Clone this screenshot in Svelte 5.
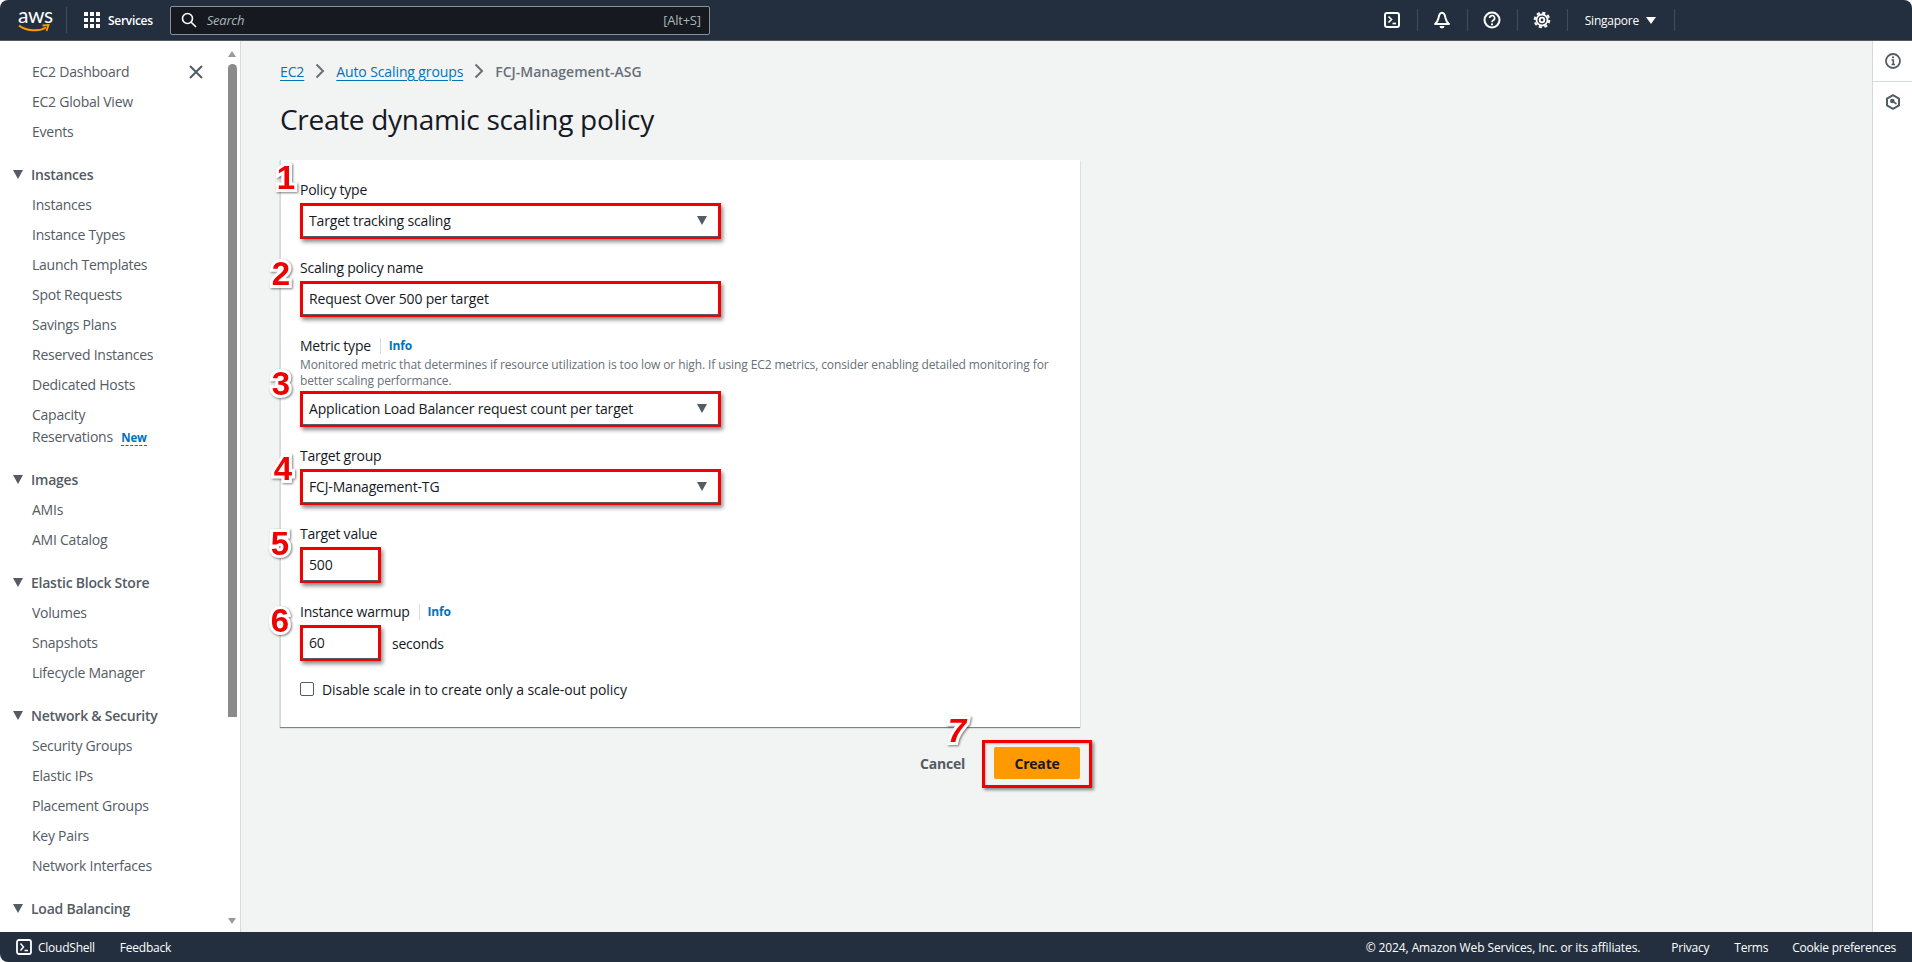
<script>
  const groups = [
    { items: ['EC2 Dashboard', 'EC2 Global View', 'Events'] },
    { title: 'Instances', items: ['Instances', 'Instance Types', 'Launch Templates', 'Spot Requests', 'Savings Plans', 'Reserved Instances', 'Dedicated Hosts'], extra: true },
    { title: 'Images', items: ['AMIs', 'AMI Catalog'] },
    { title: 'Elastic Block Store', items: ['Volumes', 'Snapshots', 'Lifecycle Manager'] },
    { title: 'Network & Security', items: ['Security Groups', 'Elastic IPs', 'Placement Groups', 'Key Pairs', 'Network Interfaces'] },
    { title: 'Load Balancing', items: [] }
  ];
</script>

<div class="page">
  <header class="top">
    <div class="logo">
      <span class="logo-text">aws</span>
      <svg class="smile" width="32" height="9" viewBox="0 0 32 9"><path d="M1 1.500C8 7 21 8 28 3.500" fill="none" stroke="#f90" stroke-width="2"/><path d="M24.500 1.500 30.500 1 28.500 7" fill="none" stroke="#f90" stroke-width="1.800"/></svg>
    </div>
    <span class="sep services-sep"></span>
    <svg class="grid" width="16" height="16" viewBox="0 0 16 16" fill="#fff">
      <rect x="0" y="0" width="4" height="4"/><rect x="6" y="0" width="4" height="4"/><rect x="12" y="0" width="4" height="4"/>
      <rect x="0" y="6" width="4" height="4"/><rect x="6" y="6" width="4" height="4"/><rect x="12" y="6" width="4" height="4"/>
      <rect x="0" y="12" width="4" height="4"/><rect x="6" y="12" width="4" height="4"/><rect x="12" y="12" width="4" height="4"/>
    </svg>
    <span class="services">Services</span>
    <div class="search">
      <svg width="16" height="16" viewBox="0 0 16 16" fill="none" stroke="#fff" stroke-width="1.600"><circle cx="6.500" cy="6.500" r="5"/><path d="M10.200 10.200 15 15"/></svg>
      <span class="search-text">Search</span>
      <span class="shortcut">[Alt+S]</span>
    </div>
    <div class="top-right">
      <span class="tool">
        <svg width="18" height="18" viewBox="0 0 18 18" fill="none" stroke="#fff" stroke-width="2"><rect x="2" y="2" width="14" height="14" rx="2"/><path d="M5.500 5.500 8.500 8.500 5.500 11.500" stroke-width="1.700"/><path d="M9.500 12.500H13" stroke-width="1.700"/></svg>
      </span>
      <span class="tool">
        <svg width="18" height="18" viewBox="0 0 18 18" fill="none" stroke="#fff" stroke-width="2"><path d="M2 13h14c-2-1.400-3-3.500-3.500-6C12 4 11 1.800 9 1.800S6 4 5.500 7C5 9.500 4 11.600 2 13Z" stroke-linejoin="round"/><path d="M6.500 15a2.500 2.500 0 0 0 5 0Z" fill="#fff" stroke="none"/></svg>
      </span>
      <span class="tool">
        <svg width="18" height="18" viewBox="0 0 18 18" fill="none" stroke="#fff" stroke-width="2"><circle cx="9" cy="9" r="7.500"/><path d="M6.600 7a2.500 2.500 0 1 1 3.700 2.200c-.9.500-1.300 1-1.300 2" stroke-width="1.700"/><circle cx="9" cy="13.300" r="1.100" fill="#fff" stroke="none"/></svg>
      </span>
      <span class="tool">
        <svg width="18" height="18" viewBox="0 0 18 18" fill="none" stroke="#fff"><circle cx="9" cy="9" r="7.300" stroke-width="2" stroke-dasharray="3.200 2.533"/><circle cx="9" cy="9" r="5.500" stroke-width="1.800"/><circle cx="9" cy="9" r="2.300" stroke-width="1.800"/></svg>
      </span>
      <span class="region">Singapore <i class="caret"></i></span>
    </div>
  </header>

  <div class="middle">
    <nav class="side">
      <button class="close" aria-label="Close">
        <svg width="14" height="14" viewBox="0 0 14 14" fill="none" stroke="#545b64" stroke-width="2"><path d="M1 1 13 13M13 1 1 13"/></svg>
      </button>
      <div class="nav-scroll">
        {#each groups as g}
          <div class="group">
            {#if g.title}
              <div class="gtitle"><i class="tri"></i>{g.title}</div>
            {/if}
            {#each g.items as it}
              <div class="item">{it}</div>
            {/each}
            {#if g.extra}
              <div class="item two">Capacity<br />Reservations <span class="new">New</span></div>
            {/if}
          </div>
        {/each}
      </div>
      <div class="scroll">
        <i class="arrow up"></i>
        <div class="thumb"></div>
        <i class="arrow down"></i>
      </div>
    </nav>

    <main class="main">
      <div class="crumbs">
        <a href="#top">EC2</a>
        <svg width="10" height="16" viewBox="0 0 10 16" fill="none" stroke="#687078" stroke-width="2"><path d="M1.500 1.500 8 8l-6.500 6.500"/></svg>
        <a href="#top">Auto Scaling groups</a>
        <svg width="10" height="16" viewBox="0 0 10 16" fill="none" stroke="#687078" stroke-width="2"><path d="M1.500 1.500 8 8l-6.500 6.500"/></svg>
        <span class="cur">FCJ-Management-ASG</span>
      </div>
      <h1>Create dynamic scaling policy</h1>

      <section class="card">
        <span class="num n1">1</span>
        <span class="num n2">2</span>
        <span class="num n3">3</span>
        <span class="num n4">4</span>
        <span class="num n5">5</span>
        <span class="num n6">6</span>

        <div class="field">
          <div class="label">Policy type</div>
          <div class="control wide">Target tracking scaling<i class="sel-caret"></i></div>
        </div>
        <div class="field">
          <div class="label">Scaling policy name</div>
          <div class="control wide">Request Over 500 per target</div>
        </div>
        <div class="field">
          <div class="label">Metric type<span class="bar"></span><a href="#top" class="info">Info</a></div>
          <div class="desc">Monitored metric that determines if resource utilization is too low or high. If using EC2 metrics, consider enabling detailed monitoring for better scaling performance.</div>
          <div class="control wide">Application Load Balancer request count per target<i class="sel-caret"></i></div>
        </div>
        <div class="field">
          <div class="label">Target group</div>
          <div class="control wide">FCJ-Management-TG<i class="sel-caret"></i></div>
        </div>
        <div class="field">
          <div class="label">Target value</div>
          <div class="control small">500</div>
        </div>
        <div class="field">
          <div class="label">Instance warmup<span class="bar"></span><a href="#top" class="info">Info</a></div>
          <div class="row">
            <div class="control small">60</div>
            <span class="unit">seconds</span>
          </div>
        </div>
        <label class="check"><i class="box"></i>Disable scale in to create only a scale-out policy</label>
      </section>

      <div class="actions">
        <span class="num n7">7</span>
        <span class="cancel">Cancel</span>
        <button class="create">Create</button>
      </div>
    </main>

    <aside class="rail">
      <div class="rail-btn">
        <svg width="16" height="16" viewBox="0 0 16 16" fill="none" stroke="#545b64" stroke-width="1.800"><circle cx="8" cy="8" r="7"/><path d="M6.500 7H8.300V11.500M6.500 11.500H10" stroke-width="1.600"/><circle cx="8" cy="4.300" r="1.100" fill="#545b64" stroke="none"/></svg>
      </div>
      <div class="rail-btn">
        <svg width="16" height="16" viewBox="0 0 16 16" fill="none" stroke="#545b64" stroke-width="2"><path d="M8 1.200 14 4.600V11.400L8 14.800 2 11.400V4.600Z" stroke-linejoin="round"/><circle cx="7.300" cy="7" r="2.300" fill="#545b64" stroke="none"/><path d="M7.500 7.200 11.500 10" stroke-width="1.600"/></svg>
      </div>
    </aside>
  </div>

  <footer class="bottom">
    <svg width="16" height="16" viewBox="0 0 16 16" fill="none" stroke="#fff" stroke-width="1.800"><rect x="1" y="1" width="14" height="14" rx="2"/><path d="M4.500 4.500 7.500 8l-3 3.500" stroke-width="1.500"/><path d="M8.500 11.500H12" stroke-width="1.500"/></svg>
    <span class="cs">CloudShell</span>
    <span class="fb">Feedback</span>
    <span class="copy">© 2024, Amazon Web Services, Inc. or its affiliates.</span>
    <span class="fl first">Privacy</span>
    <span class="fl second">Terms</span>
    <span class="fl">Cookie preferences</span>
  </footer>
</div>

<style>
  :global(body) {
    margin: 0;
    background: #fff;
    font-family: "Open Sans", "Liberation Sans", sans-serif;
    letter-spacing: -0.015em;
  }
  .page {
    width: 1912px;
    height: 962px;
    display: flex;
    flex-direction: column;
    overflow: hidden;
    font-size: 14px;
    color: #16191f;
  }

  .top {
    height: 40px;
    border-bottom: 1px solid #545b64;
    background: #232f3e;
    border-radius: 8px 8px 0 0;
    display: flex;
    align-items: center;
    color: #fff;
    flex: none;
  }
  .logo {
    width: 32px;
    height: 26px;
    margin-left: 18px;
    position: relative;
  }
  .logo-text {
    position: absolute;
    left: 0;
    top: -4px;
    font-family: Lato, sans-serif;
    font-size: 21px;
    line-height: 24px;
    letter-spacing: -0.4px;
  }
  .smile { position: absolute; left: 0; top: 17px; }
  .sep {
    width: 1px;
    height: 22px;
    background: #414d5c;
  }
  .services-sep { margin-left: 16px; margin-right: 17px; height: 26px; }
  .services { margin-left: 8px; font-size: 12px; font-weight: 600; letter-spacing: -0.3px; }
  .search {
    margin-left: 17px;
    height: 27px;
    display: flex;
    align-items: center;
    background: #16191f;
    border: 1px solid #879596;
    border-radius: 2px;
    padding: 0 8px 0 10px;
    box-sizing: content-box;
    width: 520px;
  }
  .search-text {
    margin-left: 10px;
    font-style: italic;
    font-size: 13px;
    color: #aab7b8;
  }
  .shortcut { margin-left: auto; color: #aab7b8; font-size: 13px; }
  .top-right {
    margin-left: 658px;
    display: flex;
    align-items: center;
  }
  .tool {
    width: 50px;
    height: 22px;
    display: flex;
    align-items: center;
    justify-content: center;
    border-right: 1px solid #414d5c;
    box-sizing: border-box;
  }
  .region {
    width: 107px;
    box-sizing: border-box;
    height: 22px;
    padding-left: 17px;
    border-right: 1px solid #414d5c;
    display: flex;
    align-items: center;
    gap: 4px;
    font-size: 12px;
    white-space: pre;
  }
  .caret {
    width: 0; height: 0;
    border-left: 5px solid transparent;
    border-right: 5px solid transparent;
    border-top: 7px solid #fff;
  }

  .middle { flex: 1; display: flex; min-height: 0; }

  .side {
    width: 240px;
    flex: none;
    border-right: 1px solid #d5dbdb;
    background: #fff;
    position: relative;
    overflow: hidden;
    color: #545b64;
  }
  .close {
    position: absolute;
    left: 189px;
    top: 24px;
    padding: 0;
    border: 0;
    background: none;
    display: flex;
  }
  .nav-scroll { padding-top: 16px; }
  .group { margin-bottom: 12px; }
  .item {
    height: 30px;
    line-height: 30px;
    padding-left: 32px;
    white-space: nowrap;
    font-size: 14px;
  }
  .item.two {
    height: 48px;
    line-height: 22px;
    padding-top: 4px;
    box-sizing: content-box;
  }
  .new {
    margin-left: 5px;
    color: #0073bb;
    font-weight: 700;
    font-size: 11.500px;
    border-bottom: 1px dashed #0073bb;
  }
  .gtitle {
    height: 31px;
    line-height: 30px;
    display: flex;
    align-items: center;
    font-weight: 600;
    font-size: 14px;
  }
  .tri {
    width: 0; height: 0;
    margin: 0 8px 0 13px;
    border-left: 5.500px solid transparent;
    border-right: 5.500px solid transparent;
    border-top: 9px solid #545b64;
  }
  .scroll {
    position: absolute;
    left: 228px;
    top: 0;
    bottom: 0;
    width: 10px;
  }
  .thumb {
    position: absolute;
    top: 23px;
    bottom: 215px;
    left: 0;
    width: 9px;
    border-radius: 5px 5px 0 0;
    background: #8b8b8b;
  }
  .arrow {
    position: absolute;
    left: 0;
    width: 0; height: 0;
    border-left: 4.500px solid transparent;
    border-right: 4.500px solid transparent;
  }
  .arrow.up { top: 10px; border-bottom: 6px solid #9a9a9a; }
  .arrow.down { bottom: 8px; border-top: 6px solid #9a9a9a; }

  .main {
    flex: 1;
    background: #f2f3f3;
    padding: 19px 0 0 39px;
    min-width: 0;
  }
  .crumbs {
    height: 22px;
    display: flex;
    align-items: center;
    gap: 11px;
    font-size: 14px;
  }
  .crumbs a { color: #0073bb; text-decoration: underline; text-underline-offset: 3px; letter-spacing: -0.008em; }
  .cur { color: #687078; font-weight: 600; letter-spacing: 0; }
  h1 {
    margin: 16px 0 20px;
    font-size: 28px;
    line-height: 42px;
    font-weight: 400;
    color: #16191f;
    letter-spacing: -0.3px;
  }
  .card {
    width: 800px;
    height: 567px;
    box-sizing: border-box;
    padding: 20px 18px 0 19px;
    background: #fff;
    border-left: 1px solid #d5dbdb;
    box-shadow: 0 1px 1px 0 rgba(0, 28, 36, 0.5);
    position: relative;
  }
  .field { margin-bottom: 21px; }
  .label {
    height: 20px;
    line-height: 20px;
    display: flex;
    align-items: center;
    font-size: 14px;
    margin-bottom: 5px;
  }
  .bar { width: 1px; height: 16px; background: #d5dbdb; margin: 0 8px 0 9px; }
  .info { color: #0073bb; font-weight: 700; font-size: 12px; text-decoration: none; }
  .desc {
    margin: -4px 0 4px;
    font-size: 12px;
    line-height: 16px;
    color: #687078;
    letter-spacing: -0.11px;
  }
  .control {
    height: 32px;
    margin-left: 2px;
    box-sizing: border-box;
    padding: 0 0 2px 6px;
    background: #fff;
    border: 1px solid #f00000;
    border-bottom-color: #545b64;
    box-shadow: 0 0 0 2px #f00000, 2px 3px 4px 2px rgba(0, 0, 0, 0.45);
    display: flex;
    align-items: center;
    position: relative;
    font-size: 14px;
    color: #16191f;
    letter-spacing: -0.17px;
  }
  .wide { width: 417px; }
  .small { width: 77px; }
  .sel-caret {
    position: absolute;
    right: 11px;
    top: 10px;
    width: 0; height: 0;
    border-left: 5.500px solid transparent;
    border-right: 5.500px solid transparent;
    border-top: 9px solid #545b64;
  }
  .row { display: flex; align-items: center; }
  .unit { margin-left: 13px; color: #16191f; }
  .check {
    display: flex;
    align-items: center;
    height: 20px;
    margin-top: -1px;
    letter-spacing: -0.005em;
  }
  .box {
    width: 12px;
    height: 12px;
    border: 1px solid #545b64;
    border-radius: 2px;
    margin-right: 8px;
  }
  .actions {
    width: 800px;
    margin-top: 20px;
    display: flex;
    justify-content: flex-end;
    align-items: center;
    position: relative;
  }
  .cancel {
    margin-right: 29px;
    font-weight: 700;
    color: #545b64;
    font-size: 14px;
  }
  .create {
    width: 86px;
    height: 32px;
    border: 0;
    border-radius: 2px;
    background: #ff9900;
    color: #16191f;
    font: 700 14px "Open Sans", sans-serif;
    letter-spacing: -0.2px;
    position: relative;
    padding: 0;
  }
  .create::after {
    content: "";
    position: absolute;
    left: -12px;
    right: -12px;
    top: -7px;
    bottom: -9px;
    border: 3px solid #f00000;
    box-shadow: 2px 2px 3px rgba(0, 0, 0, 0.45), inset 1px 1px 2px rgba(0, 0, 0, 0.25);
  }
  .num {
    position: absolute;
    transform: translate(-50%, -50%);
    font: 700 33px/1 "Liberation Sans", sans-serif;
    color: #f00000;
    -webkit-text-stroke: 6px #fff;
    paint-order: stroke fill;
    filter: drop-shadow(1px 1px 1px rgba(0, 0, 0, 0.5));
    z-index: 2;
    letter-spacing: 0;
  }
  .n1 { left: 5px; top: 17px; }
  .n2 { left: 0; top: 113px; }
  .n3 { left: 0; top: 223px; }
  .n4 { left: 2px; top: 308px; }
  .n5 { left: -1px; top: 383px; }
  .n6 { left: -1px; top: 460px; }
  .n7 { left: 677px; top: -17px; font-style: italic; }

  .rail {
    width: 39px;
    flex: none;
    background: #fff;
    border-left: 1px solid #d5dbdb;
  }
  .rail-btn {
    height: 40px;
    display: flex;
    align-items: center;
    justify-content: center;
    border-bottom: 1px solid #d5dbdb;
  }
  .rail-btn:last-child { border-bottom: 0; }

  .bottom {
    height: 30px;
    flex: none;
    background: #232f3e;
    border-radius: 0 0 0 8px;
    color: #fff;
    display: flex;
    align-items: center;
    padding-left: 16px;
    font-size: 12px;
  }
  .cs { margin-left: 6px; }
  .fb { margin-left: 25px; }
  .copy { margin-left: auto; letter-spacing: -0.1px; }
  .fl { margin-left: 24px; }
  .fl.first { margin-left: 31px; }
  .fl.second { margin-left: 25px; }
  .fl:last-child { margin-right: 16px; }
</style>
